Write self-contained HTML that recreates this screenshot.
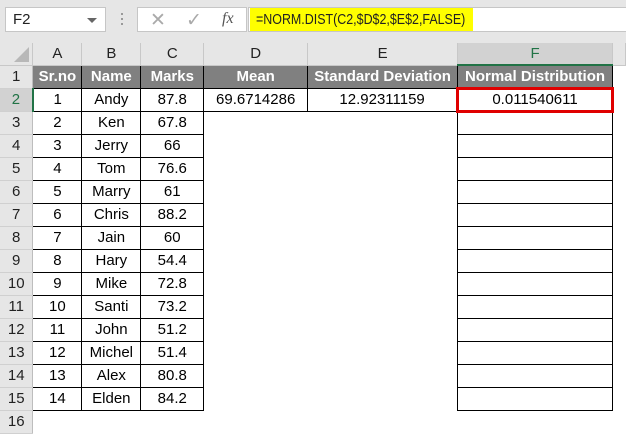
<!DOCTYPE html>
<html><head><meta charset="utf-8"><style>
*{margin:0;padding:0;box-sizing:border-box}
body{width:626px;height:430px;overflow:hidden;background:#fff;font-family:"Liberation Sans",sans-serif;position:relative}
.tb{position:absolute;left:0;top:0;width:626px;height:43px;background:#e6e6e6}
.box{position:absolute;background:#fff;border:1px solid #c6c6c6}
table{position:absolute;left:0;top:43px;border-collapse:collapse;table-layout:fixed}
td{height:23px;padding:0;text-align:center;font-size:15px;color:#000;white-space:nowrap;overflow:hidden}
.ch td{background:#e6e6e6;color:#222;border-right:1px solid #c8c8c8;border-bottom:1px solid #c8c8c8;height:22px}
td.rh{background:#e6e6e6;color:#222;border-right:1px solid #bdbdbd;border-bottom:1px solid #d0d0d0}
.h td.g{background:#808080;color:#fff;font-weight:bold;border:1px solid #000}
td.b{border:1px solid #000}
</style></head><body>
<div class="tb"></div>
<div class="box" style="left:5px;top:7px;width:101px;height:25px;font-size:15px;padding:3px 0 0 7px;color:#222">F2<span style="position:absolute;right:8px;top:10px;width:0;height:0;border-left:5px solid transparent;border-right:5px solid transparent;border-top:5px solid #666"></span></div>
<div style="position:absolute;left:121px;top:13px;width:2px;height:2px;background:#999;box-shadow:0 5px #999,0 10px #999"></div>
<div class="box" style="left:137px;top:7px;width:110px;height:25px;color:#aaa">
<span style="position:absolute;left:12px;top:1px;font-size:19px">✕</span>
<span style="position:absolute;left:48px;top:1px;font-size:19px">✓</span>
<span style="position:absolute;left:84px;top:2px;font-size:16px;font-style:italic;font-family:'Liberation Serif',serif;color:#555">fx</span></div>
<div class="box" style="left:248px;top:7px;width:380px;height:25px"></div>
<div style="position:absolute;left:250px;top:8px;width:223px;height:23px;background:#ffff00"></div>
<div style="position:absolute;left:256px;top:11px;font-size:15px;color:#222;white-space:nowrap;transform:scaleX(0.83);transform-origin:left top">=NORM.DIST(C2,$D$2,$E$2,FALSE)</div>
<table>
<colgroup><col style="width:33px"><col style="width:49px"><col style="width:59px"><col style="width:63px"><col style="width:104px"><col style="width:150px"><col style="width:155px"><col style="width:13px"></colgroup>
<tr class="ch"><td style="background:#e6e6e6"></td><td>A</td><td>B</td><td>C</td><td>D</td><td>E</td><td style="background:#d2d2d2;color:#217346;border-bottom:2px solid #217346">F</td><td></td></tr>
<tr class="h"><td class="rh">1</td><td class="g">Sr.no</td><td class="g">Name</td><td class="g">Marks</td><td class="g">Mean</td><td class="g">Standard Deviation</td><td class="g">Normal Distribution</td><td></td></tr>
<tr><td class="rh" style="background:#d2d2d2;color:#217346;border-right:2px solid #217346">2</td><td class="b">1</td><td class="b">Andy</td><td class="b">87.8</td><td class="b">69.6714286</td><td class="b">12.92311159</td><td class="b" style="border:3px solid #e00000">0.011540611</td><td></td></tr>
<tr><td class="rh">3</td><td class="b">2</td><td class="b">Ken</td><td class="b">67.8</td><td></td><td></td><td class="b"></td><td></td></tr>
<tr><td class="rh">4</td><td class="b">3</td><td class="b">Jerry</td><td class="b">66</td><td></td><td></td><td class="b"></td><td></td></tr>
<tr><td class="rh">5</td><td class="b">4</td><td class="b">Tom</td><td class="b">76.6</td><td></td><td></td><td class="b"></td><td></td></tr>
<tr><td class="rh">6</td><td class="b">5</td><td class="b">Marry</td><td class="b">61</td><td></td><td></td><td class="b"></td><td></td></tr>
<tr><td class="rh">7</td><td class="b">6</td><td class="b">Chris</td><td class="b">88.2</td><td></td><td></td><td class="b"></td><td></td></tr>
<tr><td class="rh">8</td><td class="b">7</td><td class="b">Jain</td><td class="b">60</td><td></td><td></td><td class="b"></td><td></td></tr>
<tr><td class="rh">9</td><td class="b">8</td><td class="b">Hary</td><td class="b">54.4</td><td></td><td></td><td class="b"></td><td></td></tr>
<tr><td class="rh">10</td><td class="b">9</td><td class="b">Mike</td><td class="b">72.8</td><td></td><td></td><td class="b"></td><td></td></tr>
<tr><td class="rh">11</td><td class="b">10</td><td class="b">Santi</td><td class="b">73.2</td><td></td><td></td><td class="b"></td><td></td></tr>
<tr><td class="rh">12</td><td class="b">11</td><td class="b">John</td><td class="b">51.2</td><td></td><td></td><td class="b"></td><td></td></tr>
<tr><td class="rh">13</td><td class="b">12</td><td class="b">Michel</td><td class="b">51.4</td><td></td><td></td><td class="b"></td><td></td></tr>
<tr><td class="rh">14</td><td class="b">13</td><td class="b">Alex</td><td class="b">80.8</td><td></td><td></td><td class="b"></td><td></td></tr>
<tr><td class="rh">15</td><td class="b">14</td><td class="b">Elden</td><td class="b">84.2</td><td></td><td></td><td class="b"></td><td></td></tr>
<tr><td class="rh">16</td><td></td><td></td><td></td><td></td><td></td><td></td><td></td></tr>
</table>
<div style="position:absolute;left:14px;top:47px;width:0;height:0;border-left:15px solid transparent;border-bottom:15px solid #b8b8b8"></div>
</body></html>
